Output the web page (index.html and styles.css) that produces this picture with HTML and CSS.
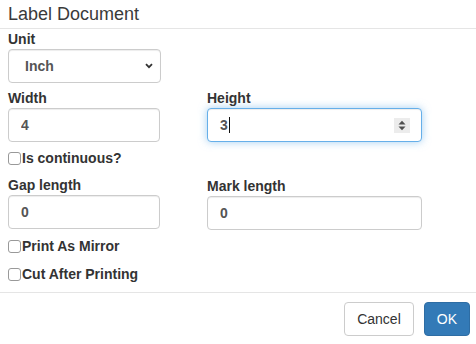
FILE: index.html
```html
<!DOCTYPE html>
<html lang="en">
<head>
    <meta charset="UTF-8">
    <meta name="viewport" content="width=device-width, initial-scale=1.0">
    <title>Label Document</title>
    <link rel="stylesheet" href="styles.css">
</head>
<body>
    <div class="modal">
        <!-- Cabeçalho -->
        <div class="modal-header">
            <h4 class="modal-title">Label Document</h4>
        </div>

        <!-- Corpo -->
        <div class="modal-body">
            <div class="field">
                <label class="field-label" for="unit">Unit</label>
                <div class="select-wrap">
                    <select class="form-control select" id="unit">
                        <option>Inch</option>
                        <option>Millimeter</option>
                    </select>
                    <svg class="chevron" width="8" height="6" viewBox="0 0 8 6">
                        <path d="M1 1.2 L4 4.2 L7 1.2" fill="none" stroke="#333" stroke-width="1.8"/>
                    </svg>
                </div>
            </div>

            <div class="row">
                <div class="field">
                    <label class="field-label" for="width">Width</label>
                    <input class="form-control" id="width" type="text" value="4">
                </div>
                <div class="field">
                    <label class="field-label">Height</label>
                    <div class="form-control focused">
                        <span>3</span><span class="caret"></span>
                        <span class="spin">
                            <svg width="16" height="15" viewBox="0 0 16 15">
                                <path d="M4.5 6.5 L8 2.8 L11.5 6.5 Z" fill="#505050"/>
                                <path d="M4.5 8.5 L8 12.2 L11.5 8.5 Z" fill="#505050"/>
                            </svg>
                        </span>
                    </div>
                </div>
            </div>

            <label class="check"><input type="checkbox">Is continuous?</label>

            <div class="row">
                <div class="field">
                    <label class="field-label" for="gap">Gap length</label>
                    <input class="form-control" id="gap" type="text" value="0">
                </div>
                <div class="field shifted">
                    <label class="field-label" for="mark">Mark length</label>
                    <input class="form-control" id="mark" type="text" value="0">
                </div>
            </div>

            <label class="check"><input type="checkbox">Print As Mirror</label>
            <label class="check"><input type="checkbox">Cut After Printing</label>
        </div>

        <!-- Rodapé -->
        <div class="modal-footer">
            <button class="btn btn-default">Cancel</button>
            <button class="btn btn-primary">OK</button>
        </div>
    </div>
</body>
</html>
```

FILE: styles.css
```css
body {
    font-family: "Liberation Sans", Arial, sans-serif;
    font-size: 14px;
    color: #333;
    margin: 0;
    background-color: #fff;
}

/* Cabeçalho */
.modal-header {
    padding: 4px 8px 3px;
    border-bottom: 1px solid #e5e5e5;
}

.modal-title {
    margin: 0;
    font-size: 18px;
    font-weight: normal;
    line-height: 21px;
    color: #3a3a3a;
}

/* Corpo */
.modal-body {
    padding: 1px 8px 0;
}

.row {
    display: grid;
    grid-template-columns: 152px 215px;
    column-gap: 47px;
}

.field {
    margin-bottom: 6px;
}

.shifted {
    margin-top: 1px;
}

.field-label {
    display: block;
    font-weight: bold;
    line-height: 19px;
}

.form-control {
    display: block;
    box-sizing: border-box;
    width: 100%;
    height: 34px;
    padding: 6px 12px;
    font-family: inherit;
    font-size: 14px;
    font-weight: bold;
    line-height: 20px;
    color: #555;
    background-color: #fff;
    border: 1px solid #ccc;
    border-radius: 4px;
    box-shadow: inset 0 1px 1px rgba(0,0,0,0.075);
    outline: none;
}

.select-wrap {
    position: relative;
    width: 153px;
}

.select {
    appearance: none;
    -webkit-appearance: none;
    padding-left: 16px;
}

.chevron {
    position: absolute;
    right: 8px;
    top: 14px;
}

.focused {
    display: flex;
    align-items: center;
    padding-right: 11px;
    border-color: #66afe9;
    box-shadow: inset 0 1px 1px rgba(0,0,0,0.075), 0 0 8px rgba(102,175,233,0.6);
}

.caret {
    width: 1px;
    height: 16px;
    margin-left: 1px;
    background-color: #111;
}

.spin {
    display: flex;
    margin-left: auto;
    background-color: #ececec;
}

/* Caixas de seleção */
.check {
    display: flex;
    align-items: center;
    height: 20px;
    margin-bottom: 8px;
    font-weight: bold;
}

.check input {
    appearance: none;
    -webkit-appearance: none;
    box-sizing: border-box;
    width: 13px;
    height: 13px;
    margin: 0 1px 0 0;
    border: 1px solid #999;
    border-radius: 3px;
    background-color: #fff;
}

/* Rodapé */
.modal-footer {
    padding: 9px 6px 0;
    border-top: 1px solid #e5e5e5;
    display: flex;
    justify-content: flex-end;
    gap: 10px;
}

.btn {
    font-family: inherit;
    font-size: 14px;
    line-height: 20px;
    padding: 6px 12px;
    border: 1px solid transparent;
    border-radius: 4px;
    cursor: pointer;
}

.btn-default {
    color: #333;
    background-color: #fff;
    border-color: #ccc;
}

.btn-primary {
    color: #fff;
    background-color: #337ab7;
    border-color: #2e6da4;
}
```
